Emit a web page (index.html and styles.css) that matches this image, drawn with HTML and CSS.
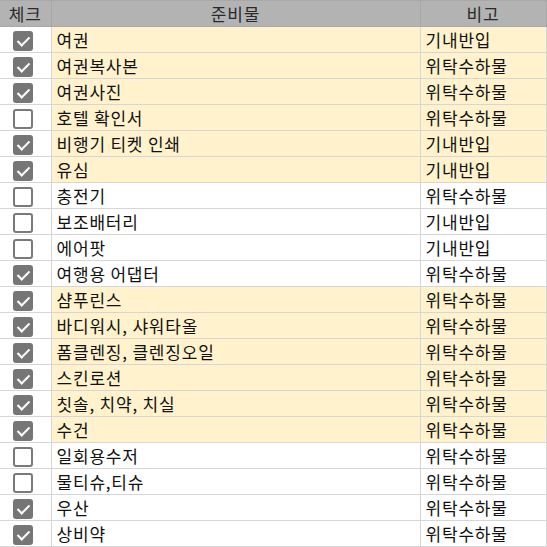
FILE: index.html
```html
<!DOCTYPE html>
<html>
<head>
    <title>준비물 체크리스트</title>
    <link rel="stylesheet" href="styles.css">
</head>
<body>
    <table class="sheet">
        <colgroup>
            <col class="col-check">
            <col class="col-item">
            <col class="col-note">
        </colgroup>
        <thead>
            <tr>
                <th>체크</th>
                <th>준비물</th>
                <th>비고</th>
            </tr>
        </thead>
        <tbody>
            <tr class="mark"><td><span class="box on"></span></td><td>여권</td><td>기내반입</td></tr>
            <tr class="mark"><td><span class="box on"></span></td><td>여권복사본</td><td>위탁수하물</td></tr>
            <tr class="mark"><td><span class="box on"></span></td><td>여권사진</td><td>위탁수하물</td></tr>
            <tr class="mark"><td><span class="box"></span></td><td>호텔 확인서</td><td>위탁수하물</td></tr>
            <tr class="mark"><td><span class="box on"></span></td><td>비행기 티켓 인쇄</td><td>기내반입</td></tr>
            <tr class="mark"><td><span class="box on"></span></td><td>유심</td><td>기내반입</td></tr>
            <tr><td><span class="box"></span></td><td>충전기</td><td>위탁수하물</td></tr>
            <tr><td><span class="box"></span></td><td>보조배터리</td><td>기내반입</td></tr>
            <tr><td><span class="box"></span></td><td>에어팟</td><td>기내반입</td></tr>
            <tr><td><span class="box on"></span></td><td>여행용 어댑터</td><td>위탁수하물</td></tr>
            <tr class="mark"><td><span class="box on"></span></td><td>샴푸린스</td><td>위탁수하물</td></tr>
            <tr class="mark"><td><span class="box on"></span></td><td>바디워시, 샤워타올</td><td>위탁수하물</td></tr>
            <tr class="mark"><td><span class="box on"></span></td><td>폼클렌징, 클렌징오일</td><td>위탁수하물</td></tr>
            <tr class="mark"><td><span class="box on"></span></td><td>스킨로션</td><td>위탁수하물</td></tr>
            <tr class="mark"><td><span class="box on"></span></td><td>칫솔, 치약, 치실</td><td>위탁수하물</td></tr>
            <tr class="mark"><td><span class="box on"></span></td><td>수건</td><td>위탁수하물</td></tr>
            <tr><td><span class="box"></span></td><td>일회용수저</td><td>위탁수하물</td></tr>
            <tr><td><span class="box"></span></td><td>물티슈,티슈</td><td>위탁수하물</td></tr>
            <tr><td><span class="box on"></span></td><td>우산</td><td>위탁수하물</td></tr>
            <tr><td><span class="box on"></span></td><td>상비약</td><td>위탁수하물</td></tr>
        </tbody>
    </table>
</body>
</html>
```

FILE: styles.css
```css
body {
    margin: 0;
    padding: 0;
    background-color: #fff;
    font-family: "Noto Sans CJK KR", "Noto Sans", sans-serif;
    color: #111;
}
.sheet {
    border-collapse: collapse;
    table-layout: fixed;
    width: 546px;
    font-size: 17px;
    letter-spacing: 0.8px;
}
.col-check {
    width: 51px;
}
.col-item {
    width: 369px;
}
.col-note {
    width: 126px;
}
.sheet th,
.sheet td {
    height: 25px;
    padding: 0;
    border: 1px solid #d6d6d6;
    line-height: 25px;
    white-space: nowrap;
    overflow: hidden;
}
.sheet th {
    background-color: #b3b3b3;
    border-color: #a8a8a8;
    font-weight: normal;
    color: #2a2a2a;
    text-align: center;
}
.sheet td {
    padding-left: 5px;
}
.sheet td:first-child {
    padding-left: 0;
    text-align: center;
}
.sheet tr:first-child td {
    border-top: none;
}
.sheet td:first-child {
    border-left: none;
}
.sheet th:first-child {
    border-left: none;
}
.mark td {
    background-color: #fff2cc;
}
.mark td:first-child {
    background-color: #fff;
}
.box {
    display: inline-block;
    width: 16px;
    height: 16px;
    margin-top: 4px;
    margin-left: -5px;
    vertical-align: top;
    border: 2px solid #7a7a7a;
    border-radius: 3px;
    background-color: #fff;
    position: relative;
}
.box.on {
    background-color: #767676;
    border-color: #767676;
}
.box.on::after {
    content: "";
    position: absolute;
    left: 5px;
    top: 1px;
    width: 5px;
    height: 10px;
    border: solid #fff;
    border-width: 0 2px 2px 0;
    transform: rotate(45deg);
}
```
